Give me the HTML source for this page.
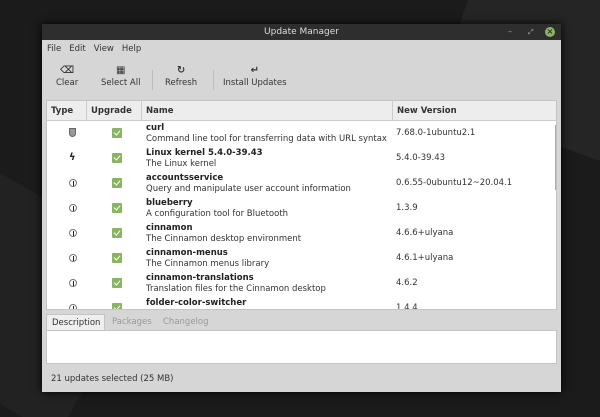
<!DOCTYPE html>
<html><head><style>
*{margin:0;padding:0;box-sizing:border-box}
html,body{width:600px;height:417px;overflow:hidden}
body{background:#1b1b1b;font-family:"DejaVu Sans","Liberation Sans",sans-serif;font-size:8.5px;color:#333;position:relative}
.bgw{position:absolute;left:0;top:0;width:600px;height:417px;overflow:hidden}
.bg1{position:absolute;left:-80px;top:200px;width:200px;height:200px;background:#222;transform:rotate(30deg)}
.bg2{position:absolute;left:460px;top:-60px;width:200px;height:200px;background:#252525;transform:rotate(20deg)}
.win{position:absolute;left:42px;top:24px;width:519px;height:368px;background:#d6d6d6;box-shadow:0 0 8px #000}
.title{height:16px;background:#2e2e2e;color:#ddd;text-align:center;font-size:9px;line-height:17px}
.menu{position:absolute;top:17px;left:5px;line-height:17px}
.menu span{margin-right:8px}
.tb{position:absolute;top:41px;text-align:center}
.tb i{display:block;font-style:normal;font-weight:bold;font-size:10px;height:13px}
.sep{position:absolute;top:46px;width:1px;height:20px;background:#bbb}
.list{position:absolute;left:4px;top:76px;width:511px;height:210px;background:#fff;border:1px solid #c4c4c4;overflow:hidden}
.hdr{height:20px;background:#ededed;border-bottom:1px solid #ccc;position:relative;font-weight:bold;line-height:20px}
.hdr span{position:absolute;top:0;height:20px;border-right:1px solid #ccc;padding-left:4px}
.row{position:absolute;left:0;width:505px;height:25px}
.row .ic{position:absolute;left:22px;top:8px;width:8px;height:8px;border:1px solid #777;border-radius:50%}
.row .ic:after{content:"";position:absolute;left:2.5px;top:1px;width:1px;height:5px;background:#222}
.cb{position:absolute;left:65px;top:7px;width:10px;height:10px;background:#8ab560;border-radius:1px}
.cb:after{content:"";position:absolute;left:3px;top:1px;width:3px;height:5px;border:solid #fff;border-width:0 1.5px 1.5px 0;transform:rotate(40deg)}
.nm{position:absolute;left:99px;top:2px;line-height:11px}
.nm b{color:#222}
.ver{position:absolute;left:349px;top:7px}
.sb{position:absolute;left:508px;top:24px;width:2px;height:65px;background:#aaa}
.tabs{position:absolute;left:4px;top:290px;width:511px}
.tab{position:absolute;top:0;height:16px;line-height:16px;color:#999}
.desc{position:absolute;left:4px;top:306px;width:511px;height:34px;background:#fff;border:1px solid #c4c4c4}
.status{position:absolute;left:9px;top:350px}
</style></head><body>
<div class="bgw"><div class="bg1"></div><div class="bg2"></div></div>
<div class="win">
<div class="title">Update Manager</div>
<div style="position:absolute;left:466px;top:3px;color:#aaa;font-size:8px">–</div>
<div style="position:absolute;left:486px;top:4px;color:#aaa;font-size:7px">⤢</div>
<div style="position:absolute;left:503px;top:3px;width:10px;height:10px;border-radius:50%;background:#8ab560;color:#2e2e2e;font-size:8px;line-height:10px;text-align:center;font-weight:bold">×</div>
<div class="menu"><span>File</span><span>Edit</span><span>View</span><span>Help</span></div>
<div class="tb" style="left:14px"><i>⌫</i>Clear</div>
<div class="tb" style="left:59px"><i>▦</i>Select All</div>
<div class="sep" style="left:110px"></div>
<div class="tb" style="left:123px"><i>↻</i>Refresh</div>
<div class="sep" style="left:171px"></div>
<div class="tb" style="left:181px"><i>↵</i>Install Updates</div>
<div class="list">
<div class="hdr"><span style="left:0;width:40px">Type</span><span style="left:40px;width:55px">Upgrade</span><span style="left:95px;width:251px">Name</span><span style="left:346px;width:165px;border:none">New Version</span></div>
<div class="row" style="top:20px"><div style="position:absolute;left:22px;top:7px;width:7px;height:9px;background:#999;border:1px solid #666;border-radius:0 0 4px 4px"></div><div class="cb"></div><div class="nm"><b>curl</b><br>Command line tool for transferring data with URL syntax</div><div class="ver">7.68.0-1ubuntu2.1</div></div>
<div class="row" style="top:45px"><div style="position:absolute;left:22px;top:6px;font-size:10px;font-weight:bold;color:#222">ϟ</div><div class="cb"></div><div class="nm"><b>Linux kernel 5.4.0-39.43</b><br>The Linux kernel</div><div class="ver">5.4.0-39.43</div></div>
<div class="row" style="top:70px"><div class="ic"></div><div class="cb"></div><div class="nm"><b>accountsservice</b><br>Query and manipulate user account information</div><div class="ver">0.6.55-0ubuntu12~20.04.1</div></div>
<div class="row" style="top:95px"><div class="ic"></div><div class="cb"></div><div class="nm"><b>blueberry</b><br>A configuration tool for Bluetooth</div><div class="ver">1.3.9</div></div>
<div class="row" style="top:120px"><div class="ic"></div><div class="cb"></div><div class="nm"><b>cinnamon</b><br>The Cinnamon desktop environment</div><div class="ver">4.6.6+ulyana</div></div>
<div class="row" style="top:145px"><div class="ic"></div><div class="cb"></div><div class="nm"><b>cinnamon-menus</b><br>The Cinnamon menus library</div><div class="ver">4.6.1+ulyana</div></div>
<div class="row" style="top:170px"><div class="ic"></div><div class="cb"></div><div class="nm"><b>cinnamon-translations</b><br>Translation files for the Cinnamon desktop</div><div class="ver">4.6.2</div></div>
<div class="row" style="top:195px"><div class="ic"></div><div class="cb"></div><div class="nm"><b>folder-color-switcher</b></div><div class="ver">1.4.4</div></div>
<div class="sb"></div>
</div>
<div class="tabs">
<div class="tab" style="left:0;width:59px;background:#efefef;border:1px solid #c4c4c4;border-bottom:none;color:#333;padding-left:5px">Description</div>
<div class="tab" style="left:66px">Packages</div>
<div class="tab" style="left:117px">Changelog</div>
</div>
<div class="desc"></div>
<div class="status">21 updates selected (25 MB)</div>
</div>
</body></html>
